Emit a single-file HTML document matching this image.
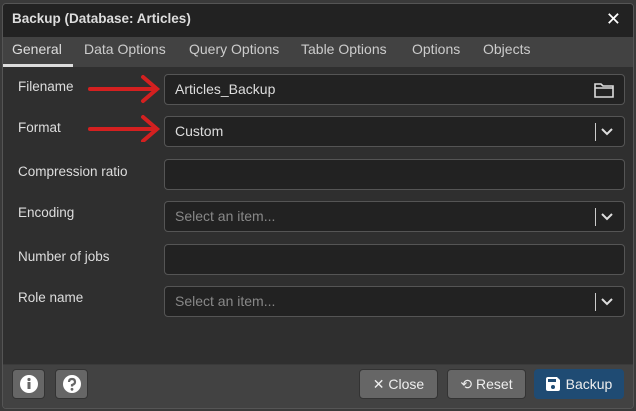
<!DOCTYPE html><html><head><style>
body{margin:0;width:636px;height:411px;background:#3a3a3a;font-family:"Liberation Sans",sans-serif;overflow:hidden;position:relative}
.dlg{position:absolute;left:2px;top:3px;width:630px;height:404px;background:#2f2f2f;border:1px solid #555;border-radius:4px;overflow:hidden}
.title{position:absolute;left:0;top:0;width:630px;height:36px;background:#222;color:#ddd;font-size:13.5px;font-weight:bold;line-height:30px;padding-left:9px;box-sizing:border-box}
.x{position:absolute;right:12px;top:0;color:#fff;font-size:18px;line-height:30px;font-weight:normal}
.tabs{position:absolute;left:0;top:33px;width:630px;height:30px;background:#424242;color:#ccc;font-size:14px}
.tabs span{position:absolute;top:4px}
.ul{position:absolute;left:0;top:27px;width:70px;height:3px;background:#ddd}
.lbl{position:absolute;left:15px;color:#ddd;font-size:13.5px}
.in{position:absolute;left:161px;width:449px;height:29px;background:#222;border:1px solid #555;border-radius:4px;color:#ddd;font-size:14px;line-height:29px;padding-left:10px;box-sizing:content-box}
.ph{color:#888}
.dd{position:absolute;right:8px;top:6px;width:20px;height:18px;border-left:1px solid #ccc}
.foot{position:absolute;left:0;top:360px;width:630px;height:44px;background:#424242;border-top:1px solid #3a3a3a}
.b{position:absolute;top:4px;height:30px;border:1px solid #333;border-radius:4px;background:#666;color:#eee;font-size:14px;line-height:28px;text-align:center;box-sizing:border-box}
</style></head><body>
<div class="dlg">
<div class="title">Backup (Database: Articles)<span class="x">✕</span></div>
<div class="tabs"><span style="left:9px;color:#ddd">General</span><span style="left:81px">Data Options</span><span style="left:186px">Query Options</span><span style="left:298px">Table Options</span><span style="left:409px">Options</span><span style="left:480px">Objects</span><div class="ul"></div></div>
<div class="lbl" style="top:75px">Filename</div>
<div class="lbl" style="top:116px">Format</div>
<div class="lbl" style="top:160px">Compression ratio</div>
<div class="lbl" style="top:201px">Encoding</div>
<div class="lbl" style="top:245px">Number of jobs</div>
<div class="lbl" style="top:286px">Role name</div>
<svg style="position:absolute;left:82px;top:68px" width="80" height="70"><g stroke="#d42020" stroke-width="4" fill="none" stroke-linecap="round"><path d="M5 17 H70 M58 5 L72 17 L58 29"/><path d="M5 57 H70 M58 45 L72 57 L58 69"/></g></svg>
<div class="in" style="top:70px">Articles_Backup<svg style="position:absolute;right:10px;top:7px" width="20" height="16"><path d="M1 2 H7 L9 4 H19 V15 H1 Z M1 6 H19" stroke="#ddd" stroke-width="1.6" fill="none"/></svg></div>
<div class="in" style="top:112px">Custom<div class="dd"><svg style="position:absolute;left:5px;top:5px" width="12" height="8"><path d="M1 1 L6 6 L11 1" stroke="#ddd" stroke-width="2" fill="none"/></svg></div></div>
<div class="in" style="top:155px"></div>
<div class="in ph" style="top:197px">Select an item...<div class="dd"><svg style="position:absolute;left:5px;top:5px" width="12" height="8"><path d="M1 1 L6 6 L11 1" stroke="#ddd" stroke-width="2" fill="none"/></svg></div></div>
<div class="in" style="top:240px"></div>
<div class="in ph" style="top:282px">Select an item...<div class="dd"><svg style="position:absolute;left:5px;top:5px" width="12" height="8"><path d="M1 1 L6 6 L11 1" stroke="#ddd" stroke-width="2" fill="none"/></svg></div></div>
<div class="foot">
<div class="b" style="left:9px;width:33px"><svg width="20" height="20" style="margin-top:4px"><circle cx="10" cy="10" r="9" fill="#fff"/><rect x="8.5" y="8" width="3" height="7" fill="#666"/><circle cx="10" cy="5.5" r="1.6" fill="#666"/></svg></div>
<div class="b" style="left:52px;width:33px"><svg width="20" height="20" style="margin-top:4px"><circle cx="10" cy="10" r="9" fill="#fff"/><path d="M7 8 Q7 5 10 5 Q13 5 13 8 Q13 10 10 11 V12.5" stroke="#666" stroke-width="2.2" fill="none"/><circle cx="10" cy="15.3" r="1.4" fill="#666"/></svg></div>
<div class="b" style="left:356px;width:79px">✕ Close</div>
<div class="b" style="left:444px;width:79px">⟲ Reset</div>
<div class="b" style="left:531px;width:90px;background:#1f4b73;border-color:#1f4b73"><svg width="14" height="14" style="vertical-align:-2px;margin-right:6px"><path d="M0 2 Q0 0 2 0 H11 L14 3 V12 Q14 14 12 14 H2 Q0 14 0 12 Z" fill="#fff"/><rect x="2" y="2" width="8" height="3" fill="#1f4b73"/><circle cx="7" cy="10" r="2" fill="#1f4b73"/></svg>Backup</div>
</div>
</div>
</body></html>
